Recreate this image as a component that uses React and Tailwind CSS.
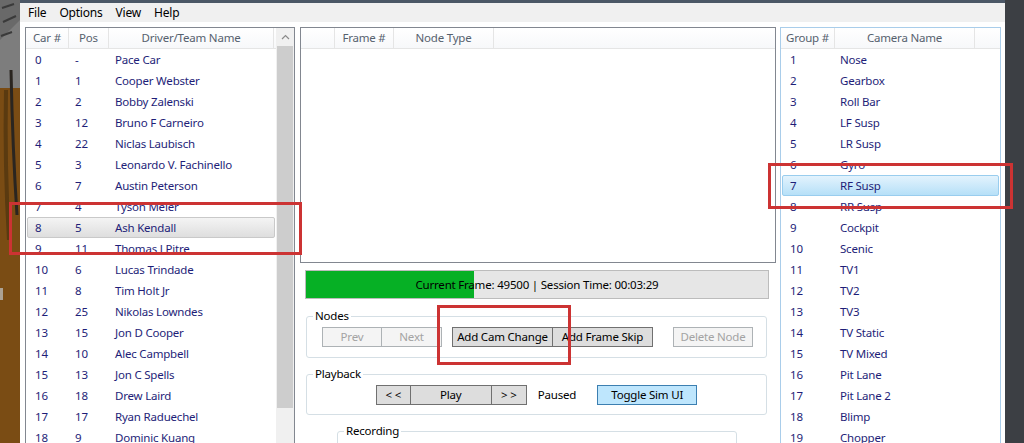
import React from "react";

const drivers = [
  ["0", "-", "Pace Car"],
  ["1", "1", "Cooper Webster"],
  ["2", "2", "Bobby Zalenski"],
  ["3", "12", "Bruno F Carneiro"],
  ["4", "22", "Niclas Laubisch"],
  ["5", "3", "Leonardo V. Fachinello"],
  ["6", "7", "Austin Peterson"],
  ["7", "4", "Tyson Meier"],
  ["8", "5", "Ash Kendall"],
  ["9", "11", "Thomas J Pitre"],
  ["10", "6", "Lucas Trindade"],
  ["11", "8", "Tim Holt Jr"],
  ["12", "25", "Nikolas Lowndes"],
  ["13", "15", "Jon D Cooper"],
  ["14", "10", "Alec Campbell"],
  ["15", "13", "Jon C Spells"],
  ["16", "18", "Drew Laird"],
  ["17", "17", "Ryan Raduechel"],
  ["18", "9", "Dominic Kuang"],
];

const cameras = [
  "Nose", "Gearbox", "Roll Bar", "LF Susp", "LR Susp", "Gyro", "RF Susp",
  "RR Susp", "Cockpit", "Scenic", "TV1", "TV2", "TV3", "TV Static",
  "TV Mixed", "Pit Lane", "Pit Lane 2", "Blimp", "Chopper",
];

const headerCell =
  "h-full flex items-center justify-center border-r border-[#e5e5e5] text-[#56616e] shrink-0";

const Backdrop = () => (
  <svg width="20" height="443" className="shrink-0 block">
    <rect width="20" height="443" fill="#7a4c14" />
    <rect width="20" height="88" fill="#7d7d7d" />
    <path d="M0 0 L20 0 L20 20 L0 40 Z" fill="#5c5c5c" opacity="0.6" />
    <path d="M2 8 L14 4 M3 22 L16 16 M1 36 L12 32" stroke="#3a3a3a" strokeWidth="2" />
    <path d="M11 70 C 12 120, 14 170, 17 215" stroke="#2a2520" strokeWidth="3" fill="none" />
    <path d="M6 90 C 5 140, 6 190, 9 240" stroke="#5a3a10" strokeWidth="4" fill="none" />
    <rect x="0" y="288" width="3" height="12" fill="#b9b8b4" opacity="0.8" />
  </svg>
);

const Btn = ({ children, kind = "normal", className = "" }) => {
  const styles = {
    normal: "bg-[#dddddd] border-[#707070] text-black",
    disabled: "bg-[#f4f4f4] border-[#adb2b5] text-[#a3a3a3]",
    active: "bg-[#bee6fd] border-[#3c7fb1] text-black",
  };
  return (
    <div
      className={`h-[20px] border flex items-center justify-center shrink-0 ${styles[kind]} ${className}`}
    >
      {children}
    </div>
  );
};

const App = () => {
  return (
    <div
      className="relative flex w-[1024px] h-[443px] overflow-hidden text-[11.5px] tracking-[-0.2px] leading-none"
      style={{ fontFamily: '"Segoe UI", "Noto Sans", sans-serif' }}
    >
      <Backdrop />

      {/* main window */}
      <div className="w-[985px] shrink-0 flex flex-col bg-white">
        <div className="h-[3px] bg-[#4b5766] shrink-0" />
        <div className="h-[19px] shrink-0 bg-[#f0f0f0] flex items-center pl-[8px] gap-[13px] text-black text-[12px]">
          <span>File</span>
          <span>Options</span>
          <span>View</span>
          <span>Help</span>
        </div>

        <div className="flex pt-[5px] pl-[5px] flex-1 min-h-0 items-start">
          {/* driver list */}
          <div className="w-[270px] h-[430px] border border-[#828790] flex shrink-0 bg-white">
            <div className="w-[250px] flex flex-col">
              <div className="h-[21px] shrink-0 flex border-b border-[#e5e5e5] bg-[linear-gradient(#ffffff,#f7f8fa)]">
                <div className={`${headerCell} w-[43px]`}>Car #</div>
                <div className={`${headerCell} w-[40px]`}>Pos</div>
                <div className={`${headerCell} w-[165px]`}>Driver/Team Name</div>
              </div>
              {drivers.map(([car, pos, name], i) => (
                <div
                  key={car}
                  className={`h-[21px] shrink-0 flex items-center text-[#1e1e78] ${
                    i === 8
                      ? "mx-[1px] pl-[7px] rounded-[2px] border border-[#c9c9c9] bg-[linear-gradient(#f4f4f4,#dedede)]"
                      : "pl-[9px]"
                  }`}
                >
                  <span className="w-[40px]">{car}</span>
                  <span className="w-[40px]">{pos}</span>
                  <span>{name}</span>
                </div>
              ))}
            </div>
            <div className="w-[18px] flex flex-col bg-[#f0f0f0]">
              <div className="h-[18px] shrink-0 flex items-center justify-center">
                <svg width="9" height="6" viewBox="0 0 9 6">
                  <path d="M1 5 L4.5 1.5 L8 5" stroke="#8a8a8a" strokeWidth="1.2" fill="none" />
                </svg>
              </div>
              <div className="h-[362px] shrink-0 mx-[1px] bg-[#cdcdcd]" />
            </div>
          </div>

          {/* node grid and controls */}
          <div className="w-[476px] ml-[5px] flex flex-col shrink-0">
            <div className="h-[236px] shrink-0 border border-[#828790] flex flex-col">
              <div className="h-[21px] shrink-0 flex border-b border-[#e5e5e5] bg-[linear-gradient(#ffffff,#f7f8fa)]">
                <div className={`${headerCell} w-[34px]`} />
                <div className={`${headerCell} w-[59px]`}>Frame #</div>
                <div className={`${headerCell} w-[100px]`}>Node Type</div>
              </div>
            </div>

            <div className="mt-[7px] ml-[5px] w-[464px] h-[29px] shrink-0 border border-[#bcbcbc] bg-[#e6e6e6] relative flex items-center justify-center">
              <div className="absolute left-0 top-0 bottom-0 w-[168px] bg-[#06b025]" />
              <span className="relative text-black">
                Current Frame: 49500 | Session Time: 00:03:29
              </span>
            </div>

            <fieldset className="mt-[9px] ml-[6px] w-[461px] shrink-0 border border-[#d5dfe5] rounded-[3px] pl-[6px] pb-[10px]">
              <legend className="px-[2px] leading-[16px] text-black">Nodes</legend>
              <div className="flex ml-[9px] mt-[3px]">
                <Btn kind="disabled" className="w-[60px]">Prev</Btn>
                <Btn kind="disabled" className="w-[60px] border-l-0">Next</Btn>
                <Btn className="w-[101px] ml-[10px]">Add Cam Change</Btn>
                <Btn className="w-[100px] border-l-0">Add Frame Skip</Btn>
                <Btn kind="disabled" className="w-[80px] ml-[20px]">Delete Node</Btn>
              </div>
            </fieldset>

            <fieldset className="mt-[8px] ml-[6px] w-[461px] shrink-0 border border-[#d5dfe5] rounded-[3px] pl-[6px] pb-[9px]">
              <legend className="px-[2px] leading-[16px] text-black">Playback</legend>
              <div className="flex items-center justify-center mt-[3px] pr-[6px]">
                <Btn className="w-[35px]">&lt; &lt;</Btn>
                <Btn className="w-[81px] border-l-0">Play</Btn>
                <Btn className="w-[35px] border-l-0">&gt; &gt;</Btn>
                <span className="ml-[11px] text-black">Paused</span>
                <Btn kind="active" className="w-[100px] ml-[21px]">Toggle Sim UI</Btn>
              </div>
            </fieldset>

            <fieldset className="mt-[8px] ml-[37px] w-[400px] h-[40px] shrink-0 border border-[#d5dfe5] rounded-[3px] pl-[6px]">
              <legend className="px-[2px] leading-[16px] text-black">Recording</legend>
            </fieldset>
          </div>

          {/* camera list */}
          <div className="w-[221px] h-[430px] ml-[4px] border border-[#a9cdea] flex flex-col shrink-0">
            <div className="h-[21px] shrink-0 flex border-b border-[#e5e5e5] bg-[linear-gradient(#ffffff,#f7f8fa)]">
              <div className={`${headerCell} w-[54px]`}>Group #</div>
              <div className={`${headerCell} w-[140px]`}>Camera Name</div>
            </div>
            {cameras.map((cam, i) => (
              <div
                key={cam}
                className={`h-[21px] shrink-0 flex items-center text-[#1e1e78] ${
                  i === 6
                    ? "mx-[1px] pl-[7px] rounded-[2px] border border-[#99cdee] bg-[linear-gradient(#e3f3fd,#b6e0f8)]"
                    : "pl-[9px]"
                }`}
              >
                <span className="w-[50px]">{i + 1}</span>
                <span>{cam}</span>
              </div>
            ))}
          </div>
        </div>
      </div>

      <div className="flex-1 bg-[#3c3f44]" />

      {/* highlight frames */}
      <div className="absolute left-[9px] top-[202px] w-[293px] h-[53px] border-[3px] border-[#cc3333]" />
      <div className="absolute left-[437px] top-[305px] w-[134px] h-[60px] border-[3px] border-[#cc3333]" />
      <div className="absolute left-[768px] top-[163px] w-[245px] h-[46px] border-[3px] border-[#cc3333]" />
    </div>
  );
};

export default App;
